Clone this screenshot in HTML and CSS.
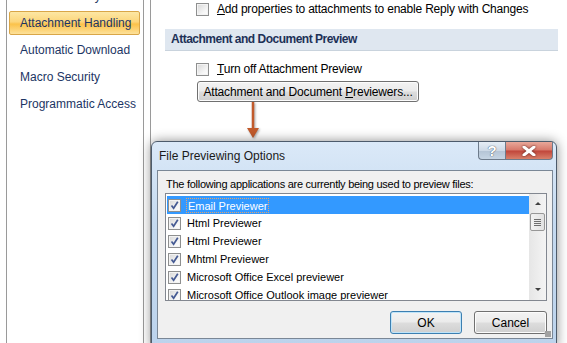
FILE: index.html
```html
<!DOCTYPE html>
<html lang="en">
<head>
    <meta charset="UTF-8">
    <title>Trust Center - Attachment Handling</title>
    <link rel="stylesheet" href="styles.css">
</head>
<body>
    <div class="app">
        <aside class="sidebar">
            <ul class="nav">
                <li>E-mail Security</li>
                <li class="active">Attachment Handling</li>
                <li>Automatic Download</li>
                <li>Macro Security</li>
                <li>Programmatic Access</li>
            </ul>
        </aside>

        <main class="pane">
            <label class="option">
                <span class="check"></span>
                <span><u>A</u>dd properties to attachments to enable Reply with Changes</span>
            </label>
            <div class="section-head">Attachment and Document Preview</div>
            <label class="option">
                <span class="check"></span>
                <span><u>T</u>urn off Attachment Preview</span>
            </label>
            <button class="btn previewers">Attachment and Document <u>P</u>reviewers...</button>
        </main>
    </div>

    <!-- callout arrow from the button to the dialog -->
    <svg class="arrow" width="15" height="40" viewBox="0 0 15 40">
        <line x1="7" y1="1" x2="7" y2="30" stroke="#c25b2c" stroke-width="2.5"/>
        <polygon points="1,27 13,27 7,37" fill="#c25b2c"/>
    </svg>

    <div class="dialog">
        <div class="titlebar">
            <span class="title">File Previewing Options</span>
            <div class="caption">
                <span class="cap help">?</span>
                <span class="cap close">
                    <svg width="14" height="10" viewBox="0 0 14 10">
                        <path d="M2 1 L12 9 M12 1 L2 9" stroke="#fff" stroke-width="3" stroke-linecap="round"/>
                    </svg>
                </span>
            </div>
        </div>

        <div class="client">
            <p class="hint">The following applications are currently being used to preview files:</p>
            <div class="listbox">
                <ul class="rows">
                    <li class="selected"><span class="check checked"></span><span class="focus">Email Previewer</span></li>
                    <li><span class="check checked"></span><span>Html Previewer</span></li>
                    <li><span class="check checked"></span><span>Html Previewer</span></li>
                    <li><span class="check checked"></span><span>Mhtml Previewer</span></li>
                    <li><span class="check checked"></span><span>Microsoft Office Excel previewer</span></li>
                    <li><span class="check checked"></span><span>Microsoft Office Outlook image previewer</span></li>
                </ul>
                <div class="scrollbar">
                    <span class="sb-arrow up"></span>
                    <span class="sb-thumb"></span>
                    <span class="sb-track"></span>
                    <span class="sb-arrow down"></span>
                </div>
            </div>
            <div class="actions">
                <button class="btn default">OK</button>
                <button class="btn">Cancel</button>
            </div>
            <span class="grip"></span>
        </div>
    </div>
</body>
</html>
```

FILE: styles.css
```css
body {
    margin: 0;
    width: 567px;
    height: 343px;
    overflow: hidden;
    position: relative;
    background: #fff;
    font-family: "Liberation Sans", Arial, sans-serif;
    font-size: 12px;
    color: #000;
}
.app {
    display: flex;
    height: 343px;
}
.sidebar {
    margin-left: 6px;
    width: 136px;
    border-left: 1px solid #9a9a9a;
    border-right: 1px solid #9a9a9a;
    overflow: hidden;
}
.nav {
    list-style: none;
    margin: -16px 0 0 2px;
    padding: 0;
    width: 131px;
}
.nav li {
    height: 22px;
    line-height: 22px;
    border: 1px solid transparent;
    border-radius: 2px;
    padding-left: 10px;
    margin-bottom: 3px;
    color: #1c3564;
    white-space: nowrap;
}
.nav li.active {
    border-color: #d9a648;
    background: linear-gradient(#fde7a4, #fcd57a 45%, #fbc24a 55%, #fde19a);
}
.pane {
    flex: 1;
    border-left: 1px solid #9a9a9a;
    margin-left: 6px;
    padding: 0 9px 0 14px;
    letter-spacing: -0.2px;
}
.option {
    display: flex;
    align-items: center;
    gap: 8px;
    height: 18px;
    padding-left: 31px;
    white-space: nowrap;
}
.section-head {
    margin-top: 11px;
    height: 21px;
    line-height: 21px;
    padding-left: 6px;
    background: #dfe7f0;
    border-bottom: 1px solid #c9d3dd;
    font-weight: bold;
    letter-spacing: -0.5px;
    color: #1d3157;
}
.section-head + .option {
    margin-top: 9px;
}
.check {
    display: inline-block;
    flex: none;
    width: 13px;
    height: 13px;
    box-sizing: border-box;
    border: 1px solid #8e8f8f;
    background: linear-gradient(135deg, #d6d6d6, #f7f7f7 70%, #fdfdfd);
    box-shadow: inset 0 0 0 1px #f3f3f3;
}
.check.checked {
    background: url("data:image/svg+xml;utf8,<svg xmlns='http://www.w3.org/2000/svg' width='11' height='11'><path d='M2.5 5.5 L4.6 8.2 L8.8 1.8' fill='none' stroke='%23455a93' stroke-width='1.7'/></svg>") center no-repeat,
                linear-gradient(135deg, #d6d6d6, #f7f7f7 70%, #fdfdfd);
}
.btn {
    font-family: inherit;
    font-size: 12px;
    color: #000;
    height: 21px;
    padding: 0;
    border: 1px solid #707070;
    border-radius: 3px;
    background: linear-gradient(#f3f3f3, #ebebeb 48%, #dddddd 52%, #cfcfcf);
    box-shadow: inset 0 0 0 1px #fcfcfc;
}
.previewers {
    display: block;
    margin: 3px 0 0 32px;
    width: 222px;
    letter-spacing: -0.15px;
}
.arrow {
    position: absolute;
    left: 246px;
    top: 101px;
    filter: drop-shadow(1px 1px 1px rgba(0, 0, 0, 0.35));
}
.dialog {
    position: absolute;
    left: 151px;
    top: 141px;
    width: 396px;
    height: 205px;
    padding: 0 3px 0 5px;
    border: 1px solid #4d5b6b;
    border-radius: 6px 6px 0 0;
    background: linear-gradient(#dbe9f8, #c5daf0 40%, #bcd3ec);
    box-shadow: 0 0 12px rgba(0, 0, 0, 0.45);
}
.titlebar {
    display: flex;
    justify-content: space-between;
    height: 28px;
}
.title {
    padding: 7px 0 0 2px;
    font-size: 12px;
    color: #1a1a1a;
}
.caption {
    display: flex;
    height: 18px;
}
.cap {
    display: flex;
    align-items: center;
    justify-content: center;
    height: 17px;
    border: 1px solid #6d7b8b;
    border-top: none;
}
.help {
    width: 26px;
    border-radius: 0 0 0 4px;
    border-right: none;
    background: linear-gradient(#e6eef6, #cdd9e6 50%, #b4c4d5 52%, #c6d5e4);
    color: #fff;
    font-size: 15px;
    font-weight: bold;
    text-shadow: 0 0 1px #47566a, 0 0 1px #47566a;
}
.close {
    width: 46px;
    border-radius: 0 0 4px 0;
    background: linear-gradient(#e8a89a, #d7786a 48%, #c0453a 52%, #d8806a);
}
.close svg {
    filter: drop-shadow(0 0 1px #5a2018);
}
.client {
    position: relative;
    height: 167px;
    border: 1px solid #7a8796;
    background: #f0f0f0;
}
.hint {
    margin: 6px 0 0 8px;
    height: 14px;
    line-height: 14px;
    font-size: 11px;
    letter-spacing: -0.27px;
    white-space: nowrap;
}
.listbox {
    display: flex;
    margin: 2px 5px 0 7px;
    height: 106px;
    border: 1px solid #828790;
    background: #fff;
    overflow: hidden;
}
.rows {
    flex: 1;
    list-style: none;
    margin: 0;
    padding: 2px 0 0 1px;
}
.rows li {
    display: flex;
    align-items: center;
    gap: 6px;
    height: 18px;
    padding-left: 1px;
    font-size: 11px;
    white-space: nowrap;
}
.rows li.selected {
    background: #3399ff;
    color: #fff;
}
.focus {
    outline: 1px dotted #e9a46a;
    padding: 1px 1px 0;
}
.scrollbar {
    display: flex;
    flex-direction: column;
    width: 17px;
    background: linear-gradient(90deg, #e6e6e6, #f4f4f4);
}
.sb-arrow {
    height: 17px;
    flex: none;
    position: relative;
}
.sb-arrow::after {
    content: "";
    position: absolute;
    left: 6px;
    border-left: 3px solid transparent;
    border-right: 3px solid transparent;
}
.sb-arrow.up::after {
    top: 8px;
    border-bottom: 3px solid #404040;
}
.sb-arrow.down::after {
    top: 5px;
    border-top: 3px solid #404040;
}
.sb-thumb {
    flex: none;
    height: 16px;
    margin: 2px 1px 0;
    border: 1px solid #979797;
    border-radius: 2px;
    background: repeating-linear-gradient(#6e6e6e 0 1px, transparent 1px 2px) center / 7px 7px no-repeat,
                linear-gradient(90deg, #f2f2f2, #e2e2e2);
}
.sb-track {
    flex: 1;
}
.actions {
    display: flex;
    justify-content: flex-end;
    gap: 12px;
    margin: 10px 5px 0 0;
}
.actions .btn {
    width: 73px;
    height: 23px;
}
.btn.default {
    width: 72px;
    border-color: #3c7fb1;
    box-shadow: inset 0 0 0 1px #bfe4f9;
}
.grip {
    position: absolute;
    right: 1px;
    bottom: 1px;
    width: 6px;
    height: 6px;
    background: radial-gradient(circle, #a0a0a0 0.7px, transparent 1px) 0 0 / 2px 2px;
}
```
